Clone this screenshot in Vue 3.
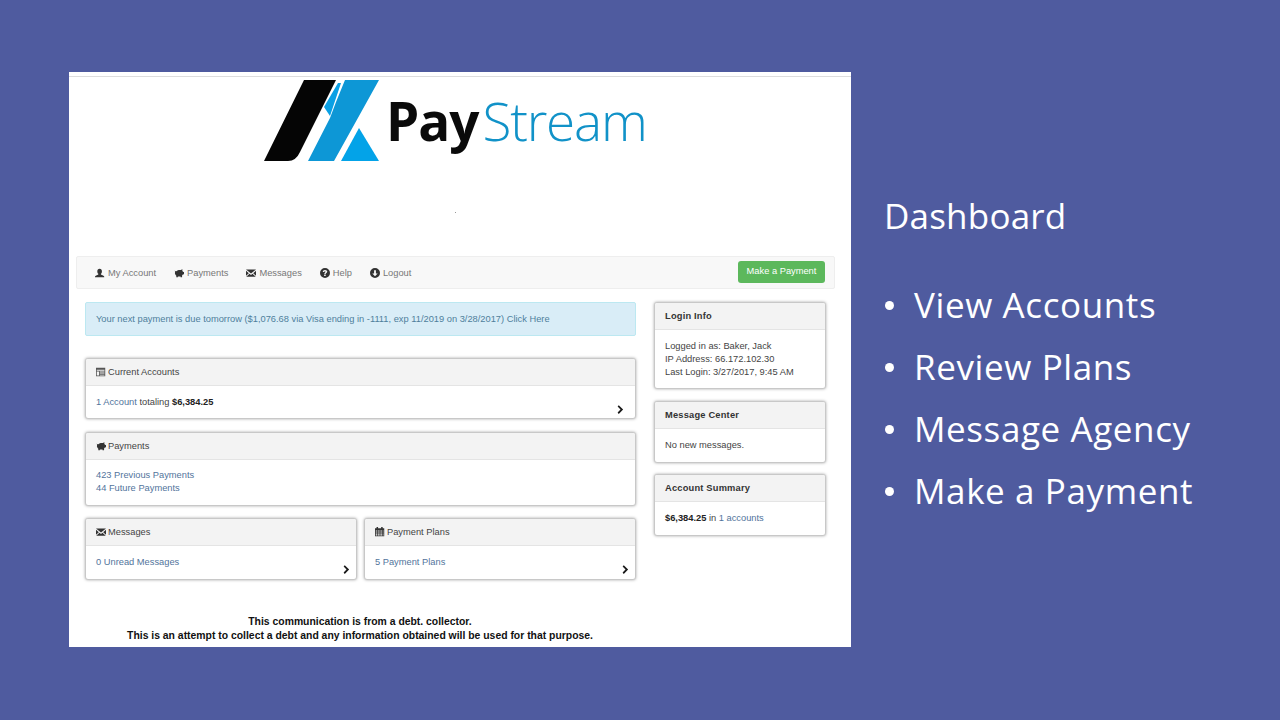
<script setup>
const icons = {
  user: 'M6 1c2 0 3 1.400 3 3.400 0 1.300-.6 2.500-1.300 3.100v1.100l3.300 1.500c.6.3 1 .8 1 1.400V12H0v-.5c0-.6.4-1.100 1-1.400l3.300-1.500V7.500C3.600 6.900 3 5.700 3 4.400 3 2.400 4 1 6 1z',
  piggy: 'M.5 3.500 3 4.200C4.200 3 5.800 2.600 7.500 2.600h1.300L11 1.500l-.2 2.300 1.400 1.400.8.100V8l-1.500.4-1 1.300V12h-2v-1H5v1H3v-2C1.700 9 1.200 7.800 1.200 6.600c0-.8.200-1.400.5-1.900z',
  envelope: 'M0 2h13L6.500 7.300zM0 3.700l3.700 3L0 10.200zM13 3.700v6.500L9.300 6.700zM4.600 7.500l1.900 1.500 1.900-1.500 4.300 3.800H.3z',
  help: 'M6.500 0a6.500 6.500 0 1 0 0 13 6.500 6.500 0 0 0 0-13zm.9 10.500H5.400V8.800h2zM8.900 6C8.300 6.800 7.400 7 7.400 8H5.500c0-1.700 1.700-2.100 1.700-3.200 0-.4-.3-.7-.8-.7-.6 0-.9.400-1 1H3.600C3.700 3.400 4.800 2.500 6.500 2.500c1.800 0 2.900 1 2.900 2.200 0 .5-.2.900-.5 1.300z',
  logout: 'M6.500 0a6.500 6.500 0 1 0 0 13 6.500 6.500 0 0 0 0-13zm0 10.800L3 7.200h2.300V3h2.400v4.200H10z',
  table: 'M0 1h12v11H0zm1 2.500V5h10V3.500zM1 6v5h3V6zm4 0v1.300h6V6zm0 2.300v1.100h6V8.300zm0 2v.7h6v-.7z',
  calendar: 'M2 0h2v1.500h4V0h2v1.500h2V12H0V1.500h2zM1 4.500V6h2V4.500zm3 0V6h2V4.500zm3 0V6h2V4.500zm3 0V6h1V4.500zM1 7v1.500h2V7zm3 0v1.500h2V7zm3 0v1.500h2V7zm3 0v1.500h1V7zM1 9.500V11h2V9.500zm3 0V11h2V9.500zm3 0V11h2V9.500zm3 0V11h1V9.500z',
}

const navItems = [
  { icon: 'user', label: 'My Account' },
  { icon: 'piggy', label: 'Payments' },
  { icon: 'envelope', label: 'Messages' },
  { icon: 'help', label: 'Help' },
  { icon: 'logout', label: 'Logout' },
]

const bullets = ['View Accounts', 'Review Plans', 'Message Agency', 'Make a Payment']
</script>

<template>
  <div class="stage">
    <div class="window">
      <div class="logo">
        <svg class="mark" width="116" height="82" viewBox="0 0 116 82">
          <path fill="#050505" d="M0 81 40 0h32L36 72q-4 9-12 9z" />
          <path fill="#09a0e5" d="M60 27 74 3h3L66 36z" />
          <path fill="#0d97d6" d="M44 81 66 38 72 22 81 0h34L70 81z" />
          <path fill="#03a3e8" d="M77 81 95 48 115 81z" />
        </svg>
        <div class="wordmark"><span class="pay">Pay</span><span class="stream">Stream</span></div>
      </div>

      <nav class="navbar">
        <a v-for="item in navItems" :key="item.label" class="nav-item">
          <svg class="icon nav-icon" viewBox="0 0 13 13"><path :d="icons[item.icon]" /></svg>
          {{ item.label }}
        </a>
        <button class="pay-btn">Make a Payment</button>
      </nav>

      <div class="content">
        <div class="left">
          <div class="alert">Your next payment is due tomorrow ($1,076.68 via Visa ending in -1111, exp 11/2019 on 3/28/2017) Click Here</div>

          <section class="panel accounts">
            <header><svg class="icon soft" viewBox="0 0 13 13"><path :d="icons.table" /></svg> Current Accounts</header>
            <div class="body row">
              <span><a>1 Account</a> totaling <b>$6,384.25</b></span>
              <svg class="chevron" viewBox="0 0 8 10"><path d="M2 0 7 5 2 10 .7 8.500 4 5 .7 1.500z" /></svg>
            </div>
          </section>

          <section class="panel payments">
            <header><svg class="icon" viewBox="0 0 13 13"><path :d="icons.piggy" /></svg> Payments</header>
            <div class="body">
              <a>423 Previous Payments</a><br />
              <a>44 Future Payments</a>
            </div>
          </section>

          <div class="split">
            <section class="panel">
              <header><svg class="icon" viewBox="0 0 13 13"><path :d="icons.envelope" /></svg> Messages</header>
              <div class="body row">
                <a>0 Unread Messages</a>
                <svg class="chevron" viewBox="0 0 8 10"><path d="M2 0 7 5 2 10 .7 8.500 4 5 .7 1.500z" /></svg>
              </div>
            </section>
            <section class="panel">
              <header><svg class="icon" viewBox="0 0 13 13"><path :d="icons.calendar" /></svg> Payment Plans</header>
              <div class="body row">
                <a>5 Payment Plans</a>
                <svg class="chevron" viewBox="0 0 8 10"><path d="M2 0 7 5 2 10 .7 8.500 4 5 .7 1.500z" /></svg>
              </div>
            </section>
          </div>

          <p class="notice">
            This communication is from a debt. collector.<br />
            This is an attempt to collect a debt and any information obtained will be used for that purpose.
          </p>
        </div>

        <aside class="right">
          <section class="panel login">
            <header class="strong">Login Info</header>
            <div class="body">
              Logged in as: Baker, Jack<br />
              IP Address: 66.172.102.30<br />
              Last Login: 3/27/2017, 9:45 AM
            </div>
          </section>
          <section class="panel side">
            <header class="strong">Message Center</header>
            <div class="body">No new messages.</div>
          </section>
          <section class="panel side">
            <header class="strong">Account Summary</header>
            <div class="body"><b>$6,384.25</b> in <a>1 accounts</a></div>
          </section>
        </aside>
      </div>
    </div>

    <div class="outline">
      <h1>Dashboard</h1>
      <ul>
        <li v-for="b in bullets" :key="b">{{ b }}</li>
      </ul>
    </div>
  </div>
</template>

<style>
html, body {
  margin: 0;
  background: #4f5b9f;
}
</style>

<style scoped>
.stage {
  width: 1280px;
  height: 720px;
  box-sizing: border-box;
  padding: 72px 0 0 69px;
  display: flex;
  background: #4f5b9f;
  overflow: hidden;
}

.window {
  width: 782px;
  height: 575px;
  flex: none;
  background: #fff;
  overflow: hidden;
  font-family: "Liberation Sans", Arial, sans-serif;
  font-size: 9.3px;
  line-height: 13px;
  color: #444;
}

.logo {
  position: relative;
  height: 180px;
  box-sizing: border-box;
  border-top: 1px solid #ddd;
  margin-top: 4px;
  padding: 3px 0 0 195px;
  display: flex;
  align-items: flex-start;
  gap: 8px;
}

/* stray speck under the logo */
.logo::after {
  content: "";
  position: absolute;
  left: 386px;
  top: 135px;
  width: 1px;
  height: 1px;
  background: #999;
}

.mark {
  flex: none;
}

.wordmark {
  margin-top: 8px;
  margin-left: -2px;
  font-family: "Open Sans", sans-serif;
  font-size: 53px;
  line-height: 66px;
  white-space: nowrap;
}

.pay {
  font-weight: 700;
  color: #0a0a0a;
  letter-spacing: -1px;
}

.stream {
  margin-left: 4px;
  color: #1192c8;
  font-weight: 350;
  letter-spacing: -1.2px;
}

.navbar {
  margin: 0 16px 0 7px;
  height: 33px;
  box-sizing: border-box;
  padding: 1px 9px 0 18px;
  display: flex;
  align-items: center;
  gap: 18px;
  background: #f8f8f8;
  border: 1px solid #eee;
  border-radius: 2px;
  color: #777;
}

.nav-item {
  display: flex;
  align-items: center;
  gap: 3px;
}

.icon {
  width: 10px;
  height: 10px;
  fill: #333;
  flex: none;
}

.icon.soft {
  fill: #555;
}

.pay-btn {
  margin: 0 0 3px auto;
  width: 87px;
  height: 22px;
  padding: 0;
  border: 0;
  border-radius: 3px;
  background: #5cb85c;
  color: #fff;
  font: inherit;
}

.content {
  padding: 13px 0 0 16px;
  display: flex;
  gap: 18px;
}

.left {
  width: 551px;
  flex: none;
}

.right {
  width: 172px;
  flex: none;
}

.alert {
  height: 34px;
  box-sizing: border-box;
  padding: 0 10px;
  display: flex;
  align-items: center;
  background: #d9edf7;
  border: 1px solid #bce8f1;
  border-radius: 2px;
  color: #4f7f9c;
  margin-bottom: 22px;
  white-space: nowrap;
}

.panel {
  box-sizing: border-box;
  border: 1px solid #c8c8c8;
  border-radius: 3px;
  box-shadow: 0 0 3px rgba(0, 0, 0, .35);
  background: #fff;
  overflow: hidden;
}

.panel header {
  height: 27px;
  box-sizing: border-box;
  padding: 0 10px;
  display: flex;
  align-items: center;
  gap: 2px;
  background: #f3f3f3;
  border-bottom: 1px solid #e4e4e4;
}

.panel header svg {
  margin-top: -1px;
}

.panel header.strong {
  font-weight: 700;
  color: #333;
  letter-spacing: .2px;
}

.body {
  padding: 10px;
}

.body.row {
  height: 33px;
  box-sizing: border-box;
  display: flex;
  justify-content: space-between;
  align-items: flex-start;
}

.panel a {
  color: #52749c;
}

.panel b {
  color: #222;
}

.chevron {
  width: 7px;
  height: 9px;
  fill: #1a1a1a;
  align-self: flex-end;
  margin: 0 -4px -5px 0;
}

.accounts {
  height: 61px;
  margin-bottom: 13px;
}

.accounts .chevron {
  margin-right: 1px;
}

.payments {
  height: 74px;
  margin-bottom: 12px;
}

.payments .body {
  padding-top: 9px;
}

.split {
  display: flex;
  gap: 7px;
}

.split .panel {
  flex: 1;
  height: 62px;
}

.notice {
  margin: 35px 0 0;
  width: 550px;
  font-size: 10.4px;
  line-height: 14px;
  font-weight: 700;
  text-align: center;
  color: #111;
}

.login {
  height: 87px;
  margin-bottom: 12px;
}

.side {
  height: 62px;
  margin-bottom: 11px;
}

.outline {
  margin: 122px 0 0 33px;
  color: #fff;
  font-family: "Open Sans", Lato, sans-serif;
  font-weight: 400;
  font-size: 35px;
  line-height: 44px;
}

.outline h1 {
  margin: 0;
  font: inherit;
  letter-spacing: .2px;
}

.outline ul {
  margin: 45px 0 0;
  padding: 0;
  list-style: none;
  display: flex;
  flex-direction: column;
  gap: 18px;
  letter-spacing: .6px;
}

.outline li {
  display: flex;
  align-items: center;
  gap: 20px;
  white-space: nowrap;
}

.outline li::before {
  content: "";
  width: 9px;
  height: 9px;
  margin-left: 1px;
  border-radius: 50%;
  background: #fff;
}
</style>
